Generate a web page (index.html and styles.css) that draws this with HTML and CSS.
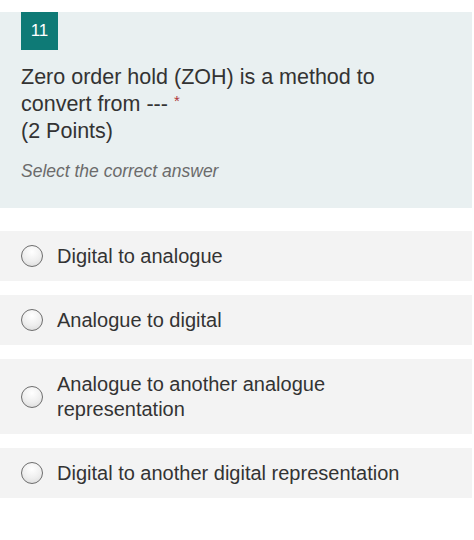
FILE: index.html
```html
<!DOCTYPE html>
<html>
<head>
<meta charset="utf-8">
<link rel="stylesheet" href="styles.css">
</head>
<body>
<div class="page">
  <section class="question">
    <div class="badge">11</div>
    <div class="title">Zero order hold (ZOH) is a method to convert from --- <span class="req">*</span><br>(2 Points)</div>
    <div class="hint">Select the correct answer</div>
  </section>
  <div class="options">
    <label class="option"><span class="radio"></span><span class="text">Digital to analogue</span></label>
    <label class="option"><span class="radio"></span><span class="text">Analogue to digital</span></label>
    <label class="option"><span class="radio"></span><span class="text">Analogue to another analogue representation</span></label>
    <label class="option"><span class="radio"></span><span class="text">Digital to another digital representation</span></label>
  </div>
</div>
</body>
</html>
```
FILE: styles.css
```css
html, body { margin: 0; padding: 0; background: #ffffff; }
body { font-family: "Liberation Sans", Arial, sans-serif; color: #333333; }
.page { width: 472px; padding-top: 12px; }
.question {
  background: #e9f0f1;
  padding: 0 21px 26px 21px;
  display: flex;
  flex-direction: column;
  align-items: flex-start;
}
.badge {
  width: 37px; height: 38px;
  background: #0e7a76;
  color: #ffffff;
  font-size: 17px;
  display: flex; align-items: center; justify-content: center;
}
.title {
  margin-top: 14px;
  font-size: 21.5px;
  line-height: 27px;
  color: #333333;
  width: 400px;
}
.req { color: #b0363a; font-size: 15px; line-height: 17px; vertical-align: text-top; }
.hint {
  margin-top: 15px;
  font-size: 17.5px;
  line-height: 22px;
  font-style: italic;
  color: #6b6b6b;
}
.options {
  display: flex; flex-direction: column; gap: 14px;
  margin-top: 23px;
}
.option {
  background: #f3f3f3;
  display: flex; align-items: center;
  padding: 12.5px 21px;
  gap: 14px;
}
.radio {
  flex: none;
  width: 20px; height: 20px;
  border-radius: 50%;
  border: 1.5px solid #6e6e6e;
  background: radial-gradient(circle at 50% 30%, #ffffff 0%, #eeeeee 55%, #d6d6d6 100%);
}
.text {
  font-size: 20px;
  line-height: 25px;
  color: #333333;
  max-width: 355px;
}
```
